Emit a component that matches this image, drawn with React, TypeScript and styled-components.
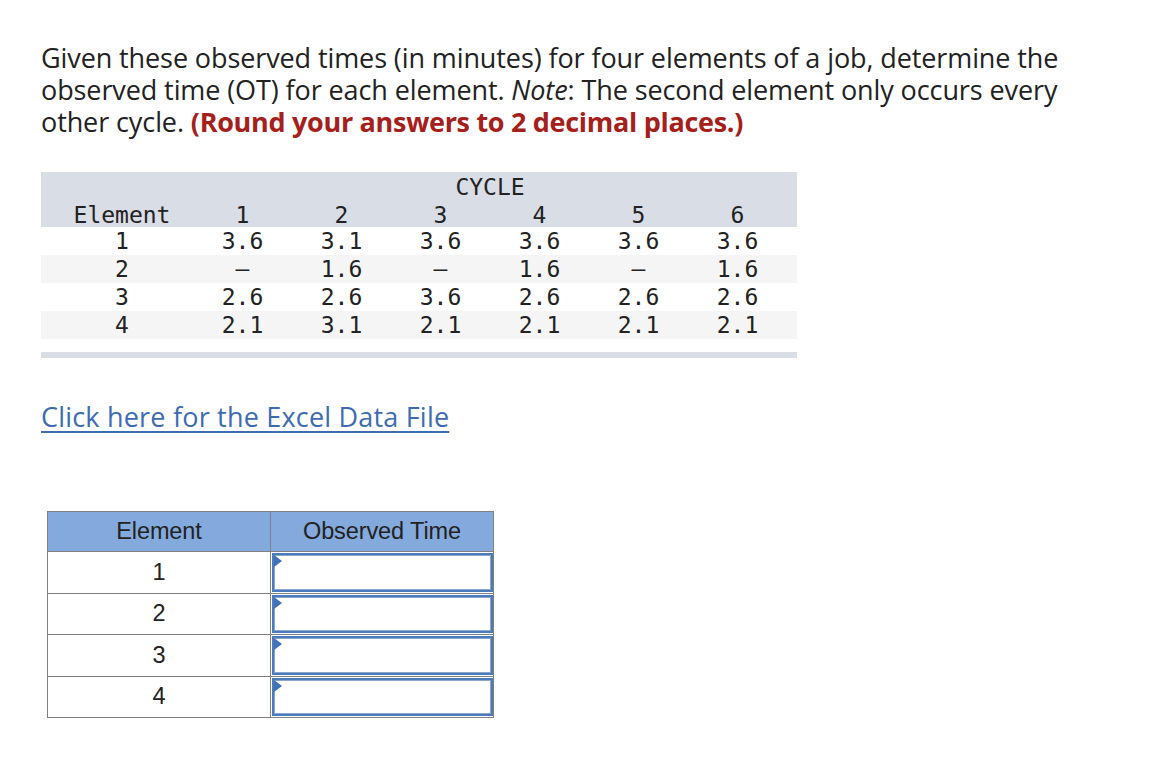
import React from 'react';
import styled, { createGlobalStyle } from 'styled-components';

const GlobalStyle = createGlobalStyle`
  body {
    margin: 0;
    background: #fff;
    color: #222;
    font-family: "Open Sans", Lato, sans-serif;
  }
`;

const Page = styled.div`
  padding: 42px 0 40px 41px;
`;

const Prompt = styled.p`
  margin: 0;
  font-size: 27px;
  line-height: 32px;
  color: #222;
  letter-spacing: -0.1px;
  em {
    font-style: italic;
  }
`;

const Hint = styled.strong`
  color: #a6201b;
  font-weight: 700;
  letter-spacing: -0.3px;
`;

// data table

const DataBlock = styled.div`
  margin-top: 34px;
  width: 756px;
`;

const DataGrid = styled.div`
  display: grid;
  grid-template-columns: 152px repeat(6, 99px) 10px;
  font-family: "DejaVu Sans Mono", "Liberation Mono", monospace;
  font-size: 23px;
  color: #222;
`;

const HeadCell = styled.div<{ $span?: number; $pad?: boolean }>`
  background: #d9dde5;
  height: 27.5px;
  line-height: 30px;
  text-align: center;
  grid-column: ${({ $span }) => ($span ? `span ${$span}` : 'auto')};
  padding-left: ${({ $pad }) => ($pad ? '10px' : '0')};
`;

const Cell = styled.div<{ $stripe: boolean; $pad?: boolean }>`
  background: ${({ $stripe }) => ($stripe ? '#f5f5f5' : '#fff')};
  height: 28px;
  line-height: 28px;
  text-align: center;
  padding-left: ${({ $pad }) => ($pad ? '10px' : '0')};
`;

const BottomBar = styled.div`
  margin-top: 13px;
  height: 6px;
  background: #d9dde5;
`;

const ExcelLink = styled.a`
  display: inline-block;
  margin-top: 43px;
  font-size: 27px;
  line-height: 32px;
  letter-spacing: 0.2px;
  color: #3d6cb3;
  text-decoration: underline;
  text-underline-offset: 4px;
  text-decoration-thickness: 2px;
  cursor: pointer;
`;

// answer table

const AnswerTable = styled.table`
  margin-top: 78px;
  margin-left: 6px;
  border-collapse: collapse;
  font-family: "Liberation Sans", Arial, sans-serif;
  font-size: 23.5px;
  letter-spacing: -0.1px;
  color: #222;
  th,
  td {
    border: 1px solid #808080;
    padding: 0;
    text-align: center;
  }
  th {
    background: #84aadd;
    height: 39px;
    font-weight: 400;
  }
  td {
    height: 40.5px;
  }
`;

const ElemCol = styled.td`
  width: 222px;
`;

const InputCol = styled.td`
  width: 222px;
  position: relative;
`;

const InputBox = styled.div`
  position: absolute;
  inset: 1px 0 1px 1px;
  border: 2px solid #4a7bbd;
  box-shadow: inset 0 0 0 1px #8aa6cc;
  background: #fff;
`;

const Flag = styled.span`
  position: absolute;
  left: 3px;
  top: 3px;
  width: 0;
  height: 0;
  border-top: 6px solid transparent;
  border-bottom: 6px solid transparent;
  border-left: 8px solid #3f72b8;
`;

const cycles = [1, 2, 3, 4, 5, 6];
const rows: (number | null)[][] = [
  [3.6, 3.1, 3.6, 3.6, 3.6, 3.6],
  [null, 1.6, null, 1.6, null, 1.6],
  [2.6, 2.6, 3.6, 2.6, 2.6, 2.6],
  [2.1, 3.1, 2.1, 2.1, 2.1, 2.1],
];

export default function App() {
  return (
    <>
      <GlobalStyle />
      <Page>
        <Prompt>
          Given these observed times (in minutes) for four elements of a job, determine the
          <br />
          observed time (OT) for each element. <em>Note</em>: The second element only occurs every
          <br />
          other cycle. <Hint>(Round your answers to 2 decimal places.)</Hint>
        </Prompt>

        <DataBlock>
          <DataGrid>
            <HeadCell $pad />
            <HeadCell $span={6}>CYCLE</HeadCell>
            <HeadCell />
            <HeadCell $pad>Element</HeadCell>
            {cycles.map((c) => (
              <HeadCell key={c}>{c}</HeadCell>
            ))}
            <HeadCell />
            {rows.map((r, i) => (
              <React.Fragment key={i}>
                <Cell $stripe={i % 2 === 1} $pad>
                  {i + 1}
                </Cell>
                {r.map((v, j) => (
                  <Cell key={j} $stripe={i % 2 === 1}>
                    {v === null ? '–' : v.toFixed(1)}
                  </Cell>
                ))}
                <Cell $stripe={i % 2 === 1} />
              </React.Fragment>
            ))}
          </DataGrid>
          <BottomBar />
        </DataBlock>

        <ExcelLink>Click here for the Excel Data File</ExcelLink>

        <AnswerTable>
          <thead>
            <tr>
              <th>Element</th>
              <th>Observed Time</th>
            </tr>
          </thead>
          <tbody>
            {[1, 2, 3, 4].map((n) => (
              <tr key={n}>
                <ElemCol>{n}</ElemCol>
                <InputCol>
                  <InputBox />
                  <Flag />
                </InputCol>
              </tr>
            ))}
          </tbody>
        </AnswerTable>
      </Page>
    </>
  );
}
